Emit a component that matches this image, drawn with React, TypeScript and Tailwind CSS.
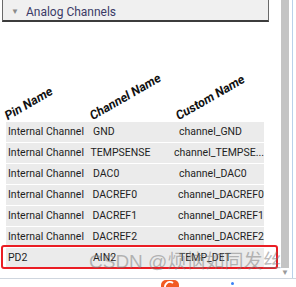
import React from 'react';

interface Row {
    pin: string;
    channel: string;
    custom: string;
}

const rows: Row[] = [
    { pin: 'Internal Channel', channel: 'GND', custom: 'channel_GND' },
    { pin: 'Internal Channel', channel: 'TEMPSENSE', custom: 'channel_TEMPSE...' },
    { pin: 'Internal Channel', channel: 'DAC0', custom: 'channel_DAC0' },
    { pin: 'Internal Channel', channel: 'DACREF0', custom: 'channel_DACREF0' },
    { pin: 'Internal Channel', channel: 'DACREF1', custom: 'channel_DACREF1' },
    { pin: 'Internal Channel', channel: 'DACREF2', custom: 'channel_DACREF2' },
    { pin: 'PD2', channel: 'AIN2', custom: 'TEMP_DET' },
];

const headers = ['Pin Name', 'Channel Name', 'Custom Name'];

const App = () => {
    return (
        <div className="relative w-[296px] h-[287px] overflow-hidden bg-white font-['Roboto',sans-serif] text-[#1f1f1f]">
            <div className="flex h-[278px]">
                {/* Left: panel + table */}
                <div className="w-[281px] flex flex-col">
                    {/* Collapsible header */}
                    <div className="ml-[2px] w-[267px] h-[22px] shrink-0 bg-[#f0f0f0] border-x border-[#6a6a6a] border-b-2 border-b-[#3c3c3c] flex items-center pt-[3px]">
                        <span className="ml-[8px] text-[8px] leading-none text-[#8a8a8a]">▼</span>
                        <span className="ml-[7px] text-[12px] leading-none text-[#3b3a66]">Analog Channels</span>
                    </div>

                    {/* Rotated column headers */}
                    <div className="h-[100px] shrink-0 flex items-end pl-[9px]">
                        {headers.map((h, i) => (
                            <div key={h} className={i === 0 ? 'w-[85px]' : i === 1 ? 'w-[86px]' : 'w-[85px]'}>
                                <div className="origin-bottom-left -rotate-[30deg] whitespace-nowrap text-[12.5px] leading-none font-bold italic text-[#111]">
                                    {h}
                                </div>
                            </div>
                        ))}
                    </div>

                    {/* Rows */}
                    <div className="flex flex-col">
                        {rows.map((r, i) => (
                            <div key={i} className="ml-[6px] w-[258px] h-[21px] bg-[#ebebeb] border-b border-white flex items-center text-[10.5px] leading-none pt-[1px]">
                                <span className="w-[87px] pl-[2px] whitespace-nowrap">{r.pin}</span>
                                <span className="w-[86px] whitespace-nowrap">{r.channel}</span>
                                <span className="whitespace-nowrap">{r.custom}</span>
                            </div>
                        ))}
                    </div>
                </div>

                {/* Scrollbar */}
                <div className="w-[8px] flex flex-col">
                    <div className="h-[268px] bg-[#c4c4c4]" />
                    <div className="text-[8px] leading-none text-[#9a9a9a] text-center mt-[1px]">▼</div>
                </div>
                <div className="w-[3px]" />
                <div className="w-[1px] bg-[#b9d1ea]" />
            </div>

            {/* Bottom strip */}
            <div className="h-[9px] border-t border-[#cfd6de] flex items-start">
                <svg width="18" height="10" viewBox="0 0 18 10" className="ml-[161px] mt-[1px]">
                    <rect x="0" y="0" width="18" height="14" rx="5" fill="#f25a22" />
                    <path d="M12 3 A5 5 0 1 0 12 11" stroke="white" strokeWidth="2" fill="none" />
                </svg>
                <div className="ml-[52px] mt-[3px] w-[3px] h-[3px] rounded-full bg-[#3b82f6]" />
            </div>

            {/* Selection highlight */}
            <div className="absolute left-[1px] top-[245px] w-[277px] h-[24px] border-2 border-[#ea1d24] rounded-[3px]" />

            {/* Watermark */}
            <div className="absolute left-[89px] top-[252px] whitespace-nowrap text-[19px] leading-none font-['Liberation_Sans','Noto_Sans_CJK_SC',sans-serif] text-[rgba(120,120,120,0.5)]">
                CSDN @烦恼如同发丝
            </div>
        </div>
    );
};

export default App;
